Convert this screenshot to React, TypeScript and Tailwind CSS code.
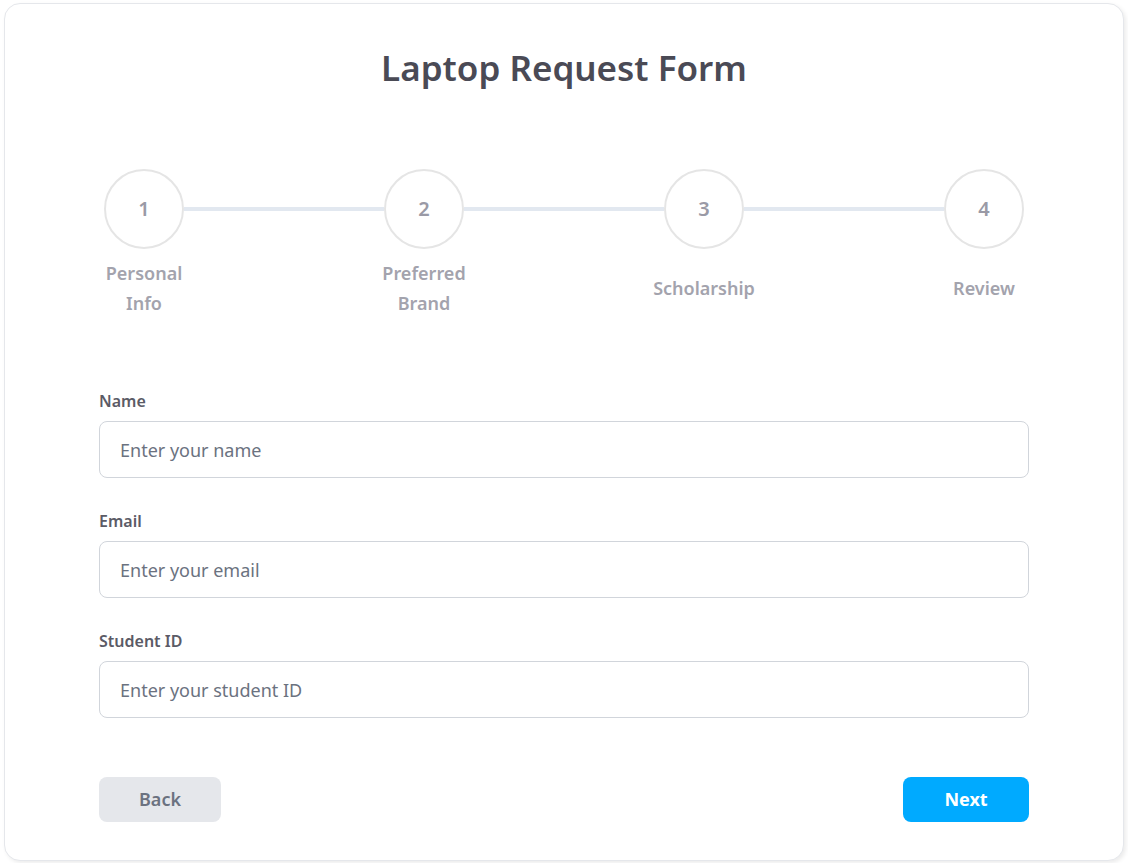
import React from "react";

const steps = [
  { n: 1, label: "Personal Info" },
  { n: 2, label: "Preferred Brand" },
  { n: 3, label: "Scholarship" },
  { n: 4, label: "Review" },
];

const fields = [
  { label: "Name", placeholder: "Enter your name" },
  { label: "Email", placeholder: "Enter your email" },
  { label: "Student ID", placeholder: "Enter your student ID" },
];

export default function App() {
  return (
    <div
      className="min-h-[863px] w-full bg-white pl-[4px] pt-[3px] pr-[4px] pb-[2px]"
      style={{ fontFamily: '"Noto Sans", "Open Sans", sans-serif' }}
    >
      <div className="h-[858px] rounded-[16px] border border-[#e5e7eb] bg-white shadow-[2px_2px_4px_rgba(0,0,0,0.08)] px-[94px] pt-[40px]">
        <h1 className="text-center text-[35px] leading-[48px] font-semibold text-[#4a4a55]">
          Laptop Request Form
        </h1>

        <div className="mt-[77px] flex items-start">
          {steps.map((s, i) => (
            <React.Fragment key={s.n}>
              <div className="flex w-[90px] shrink-0 flex-col items-center">
                <div className="flex h-[80px] w-[80px] items-center justify-center rounded-full border-2 border-[#e5e5e5] bg-white text-[20px] font-semibold text-[#9a9aa6]">
                  {s.n}
                </div>
                <div className="mt-[9px] flex h-[60px] w-[90px] items-center justify-center text-center text-[18px] leading-[30px] font-semibold text-[#a3a3ad]">
                  <span className="px-[4px]">{s.label}</span>
                </div>
              </div>
              {i < steps.length - 1 && (
                <div className="mx-[-5px] mt-[38px] h-[4px] flex-1 bg-[#e2e8f0]" />
              )}
            </React.Fragment>
          ))}
        </div>

        <div className="mt-[71px] flex flex-col gap-[31px]">
          {fields.map((f) => (
            <div key={f.label} className="flex flex-col">
              <label className="text-[16px] leading-[24px] font-semibold text-[#5b5b66]">
                {f.label}
              </label>
              <input
                type="text"
                placeholder={f.placeholder}
                className="mt-[8px] h-[57px] w-full rounded-[8px] border border-[#d1d5db] bg-white px-[20px] text-[18px] text-[#6b7280] placeholder:text-[#6b7280] outline-none"
              />
            </div>
          ))}
        </div>

        <div className="mt-[59px] flex items-center justify-between">
          <button className="h-[45px] w-[122px] rounded-[8px] bg-[#e5e7eb] text-[18px] font-semibold text-[#6b7280]">
            Back
          </button>
          <button className="h-[45px] w-[126px] rounded-[8px] bg-[#00aaff] text-[18px] font-bold text-white">
            Next
          </button>
        </div>
      </div>
    </div>
  );
}
